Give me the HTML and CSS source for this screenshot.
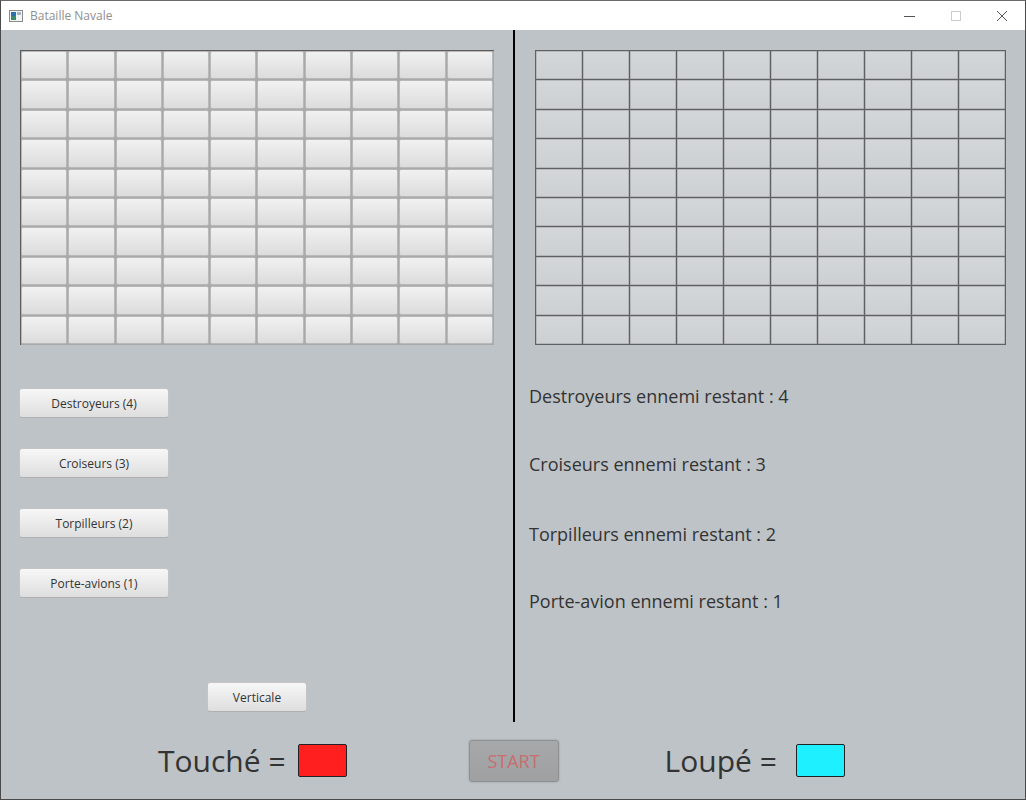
FILE: index.html
```html
<!DOCTYPE html>
<html lang="fr">
<head>
<meta charset="utf-8">
<title>Bataille Navale</title>
<link rel="stylesheet" href="styles.css">
</head>
<body>
<div class="window">
  <div class="titlebar">
    <div class="title-left">
      <svg class="app-icon" width="14" height="12" viewBox="0 0 14 12">
        <rect x="0.5" y="0.5" width="13" height="11" fill="#f4f4f4" stroke="#8a8a8a"/>
        <rect x="2" y="2" width="5" height="8" fill="#3b8a6a"/>
        <rect x="2" y="2" width="5" height="4" fill="#2e6fb0"/>
        <rect x="8" y="2" width="4" height="3" fill="#9fb7c7"/>
      </svg>
      <span class="title">Bataille Navale</span>
    </div>
    <div class="controls">
      <svg class="ctl" width="46" height="30" viewBox="0 0 46 30"><line x1="17" y1="15.5" x2="28" y2="15.5" stroke="#555" stroke-width="1"/></svg>
      <svg class="ctl" width="46" height="30" viewBox="0 0 46 30"><rect x="18.5" y="10.5" width="9" height="9" fill="none" stroke="#ccc"/></svg>
      <svg class="ctl" width="46" height="30" viewBox="0 0 46 30"><path d="M18 10 L28 20 M28 10 L18 20" stroke="#555" stroke-width="1"/></svg>
    </div>
  </div>
  <div class="content">
    <div class="main">
      <section class="panel left">
        <div class="grid own" id="own"></div>
        <div class="ships">
          <button class="btn ship">Destroyeurs (4)</button>
          <button class="btn ship">Croiseurs (3)</button>
          <button class="btn ship">Torpilleurs (2)</button>
          <button class="btn ship">Porte-avions (1)</button>
        </div>
        <div class="orient">
          <button class="btn vert">Verticale</button>
        </div>
      </section>
      <div class="divider"></div>
      <section class="panel right">
        <div class="grid enemy" id="enemy"></div>
        <div class="stats">
          <p class="stat s1">Destroyeurs ennemi restant : 4</p>
          <p class="stat s2">Croiseurs ennemi restant : 3</p>
          <p class="stat s3">Torpilleurs ennemi restant : 2</p>
          <p class="stat s4">Porte-avion ennemi restant : 1</p>
        </div>
      </section>
    </div>
    <div class="bottom">
      <div class="legend hit">
        <span class="legend-label">Touché =</span>
        <span class="swatch red"></span>
      </div>
      <button class="start">START</button>
      <div class="legend miss">
        <span class="legend-label">Loupé =</span>
        <span class="swatch cyan"></span>
      </div>
    </div>
  </div>
</div>
<script src="script.js"></script>
</body>
</html>
```
FILE: script.js
```js
['own', 'enemy'].forEach(function (id) {
  var g = document.getElementById(id);
  for (var i = 0; i < 100; i++) {
    var c = document.createElement('div');
    c.className = 'cell';
    g.appendChild(c);
  }
});
```
FILE: styles.css
```css
* { box-sizing: border-box; }
html, body { margin: 0; padding: 0; }
body {
  width: 1026px;
  height: 800px;
  font-family: "Open Sans", "Noto Sans", sans-serif;
  background: #bec3c7;
  overflow: hidden;
}
.window {
  width: 1026px;
  height: 800px;
  border: 1px solid #4a4a4a;
  border-top-color: #6a6a6a;
  display: flex;
  flex-direction: column;
  background: #bec3c7;
}
.titlebar {
  height: 29px;
  background: #ffffff;
  display: flex;
  align-items: center;
  justify-content: space-between;
  flex: none;
}
.title-left {
  display: flex;
  align-items: center;
  padding-left: 8px;
  gap: 7px;
}
.title {
  font-size: 12px;
  color: #8f8f8f;
}
.controls { display: flex; height: 29px; align-items: center; }
.ctl { display: block; }

.content {
  flex: 1;
  display: flex;
  flex-direction: column;
}
.main {
  height: 692px;
  display: flex;
  flex: none;
}
.panel { position: relative; }
.left {
  width: 512px;
  padding: 20px 0 0 19px;
  display: flex;
  flex-direction: column;
}
.divider {
  width: 2px;
  background: #000;
}
.right {
  flex: 1;
  padding: 20px 0 0 20px;
}

.grid {
  display: grid;
  grid-template-columns: repeat(10, 1fr);
  grid-template-rows: repeat(10, 1fr);
}
.own {
  width: 474px;
  height: 295px;
  background: #a9a9a9;
  border-top: 1px solid #5c5c5c;
  border-left: 1px solid #5c5c5c;
  gap: 0;
}
.own .cell {
  border: 1px solid #b9b9b9;
  border-radius: 2px;
  background: linear-gradient(#f1f1f1, #dcdcdc);
  margin: 0 1px 1px 0;
}
.enemy {
  width: 471px;
  height: 295px;
  background: #5e6062;
  border: 1px solid #5e6062;
  gap: 1px;
  padding: 0;
}
.enemy .cell {
  background: linear-gradient(#d4d7da, #cdd0d3);
  box-shadow: inset 0 0 0 0.5px #9a9c9e;
}

.btn {
  font-family: "Open Sans", "Noto Sans", sans-serif;
  font-size: 12px;
  color: #333;
  background: linear-gradient(#f7f7f7, #dedede);
  border: 1px solid #c4c4c4;
  border-bottom-color: #b0b0b0;
  border-radius: 3px;
  height: 30px;
  padding: 0;
  cursor: pointer;
}
.ships {
  display: flex;
  flex-direction: column;
  gap: 30px;
  margin-top: 43px;
  margin-left: -1px;
}
.ship { width: 150px; }
.orient {
  margin-top: 84px;
  padding-left: 187px;
}
.vert { width: 100px; }

.stats {
  margin-left: -6px;
  margin-top: 39px;
}
.stat {
  margin: 0;
  font-size: 18px;
  color: #333;
  line-height: 25px;
}
.s2 { margin-top: 43px; }
.s3 { margin-top: 45px; }
.s4 { margin-top: 42px; }

.bottom {
  flex: 1;
  display: flex;
  align-items: center;
  padding-left: 157px;
  padding-bottom: 0;
}
.legend {
  display: flex;
  align-items: center;
}
.legend-label {
  font-size: 30px;
  color: #333;
  line-height: 40px;
}
.hit .legend-label { margin-right: 12px; }
.miss .legend-label { margin-right: 19px; }
.swatch {
  display: block;
  width: 49px;
  height: 33px;
  border: 1px solid #222;
  border-radius: 2px;
}
.red { background: #ff1f1f; }
.cyan { background: #1ff0ff; }
.start {
  margin-left: 122px;
  margin-right: 106px;
  width: 90px;
  height: 42px;
  font-family: "Open Sans", "Noto Sans", sans-serif;
  font-size: 18px;
  color: #c86e70;
  background: linear-gradient(#a6a8aa, #9ea0a2);
  border: 1px solid #8e9092;
  border-radius: 3px;
  box-shadow: 0 0 2px rgba(0,0,0,0.25);
  padding: 0;
}
```
